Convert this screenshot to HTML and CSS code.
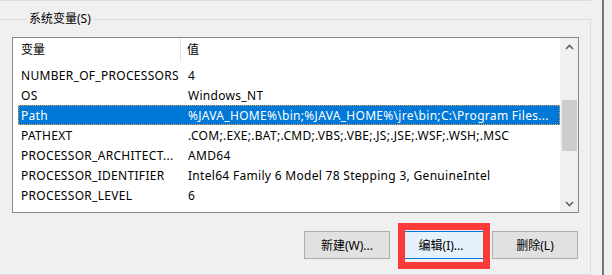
FILE: index.html
```html
<!DOCTYPE html>
<html lang="zh-CN">
<head>
  <meta charset="UTF-8" />
  <title>环境变量</title>
  <link rel="stylesheet" href="styles.css">
</head>
<body>
  <div class="window">
    <div class="prev-group"></div>

    <fieldset class="group">
      <legend>系统变量(S)</legend>

      <div class="listbox">
        <div class="list-main">
          <div class="list-header">
            <div class="col-name">变量</div>
            <div class="col-value">值</div>
          </div>
          <div class="row"><div class="col-name">NUMBER_OF_PROCESSORS</div><div class="col-value">4</div></div>
          <div class="row"><div class="col-name">OS</div><div class="col-value">Windows_NT</div></div>
          <div class="row selected"><div class="col-name">Path</div><div class="col-value">%JAVA_HOME%\bin;%JAVA_HOME%\jre\bin;C:\Program Files...</div></div>
          <div class="row"><div class="col-name">PATHEXT</div><div class="col-value">.COM;.EXE;.BAT;.CMD;.VBS;.VBE;.JS;.JSE;.WSF;.WSH;.MSC</div></div>
          <div class="row"><div class="col-name">PROCESSOR_ARCHITECT...</div><div class="col-value">AMD64</div></div>
          <div class="row"><div class="col-name">PROCESSOR_IDENTIFIER</div><div class="col-value">Intel64 Family 6 Model 78 Stepping 3, GenuineIntel</div></div>
          <div class="row"><div class="col-name">PROCESSOR_LEVEL</div><div class="col-value">6</div></div>
        </div>

        <div class="scrollbar">
          <div class="arrow">
            <svg width="9" height="6" viewBox="0 0 9 6"><polyline points="1,5 4.5,1.5 8,5" fill="none" stroke="#606060" stroke-width="1.6"/></svg>
          </div>
          <div class="track"><div class="thumb"></div></div>
          <div class="arrow">
            <svg width="9" height="6" viewBox="0 0 9 6"><polyline points="1,1 4.5,4.5 8,1" fill="none" stroke="#606060" stroke-width="1.6"/></svg>
          </div>
        </div>
      </div>

      <div class="buttons">
        <button class="btn">新建(W)...</button>
        <div class="marked">
          <button class="btn btn-focus">编辑(I)...</button>
        </div>
        <button class="btn">删除(L)</button>
      </div>
    </fieldset>
  </div>
</body>
</html>
```

FILE: styles.css
```css
body {
  margin: 0;
  background-color: #f0f0f0;
  font-family: "Noto Sans", "Noto Sans CJK SC", sans-serif;
  font-size: 12px;
  color: #000;
  overflow: hidden;
}
.window {
  width: 602px;
  height: 275px;
  border-right: 2px solid #767676;
  overflow: hidden;
}
.prev-group {
  width: 591px;
  height: 0;
  border-bottom: 1px solid #dcdcdc;
}
.group {
  margin: 10px 0 0 -10px;
  width: 601px;
  height: 264px;
  box-sizing: border-box;
  border: 1px solid #dcdcdc;
  padding: 10px 11px 0 21px;
}
.group legend {
  padding: 0 2px;
  margin-left: 15px;
  line-height: 16px;
}
.listbox {
  display: flex;
  height: 176px;
  box-sizing: border-box;
  border: 1px solid #828790;
  background-color: white;
}
.list-main {
  width: 547px;
  overflow: hidden;
  border-right: 1px solid #f0f0f0;
}
.list-header {
  display: flex;
  height: 24px;
  line-height: 24px;
  margin-bottom: 3px;
}
.list-header .col-name {
  width: 168px;
  padding-left: 8px;
  box-sizing: border-box;
  border-right: 1px solid #e5e5e5;
}
.list-header .col-value {
  padding-left: 6px;
}
.row {
  display: flex;
  height: 20px;
  line-height: 21px;
  margin-left: 5px;
  white-space: nowrap;
  letter-spacing: 0.3px;
}
.row .col-name {
  width: 164px;
  padding-left: 3px;
  box-sizing: border-box;
  overflow: hidden;
}
.row .col-value {
  padding-left: 6px;
  overflow: hidden;
}
.row.selected {
  background-color: #0078d7;
  color: white;
  outline: 1px dotted #f7a24a;
  outline-offset: -1px;
}
.scrollbar {
  width: 17px;
  display: flex;
  flex-direction: column;
  background-color: #f0f0f0;
}
.arrow {
  height: 17px;
  display: flex;
  align-items: center;
  justify-content: center;
}
.track {
  flex: 1;
  padding: 45px 1px 0 1px;
}
.thumb {
  height: 51px;
  background-color: #cdcdcd;
}
.buttons {
  display: flex;
  justify-content: flex-end;
  gap: 8px;
  margin-top: 18px;
  padding-right: 1px;
}
.btn {
  width: 86px;
  height: 28px;
  padding: 0;
  font-family: inherit;
  font-size: 12px;
  color: #000;
  background-color: #e1e1e1;
  border: 1px solid #adadad;
}
.btn-focus {
  background-color: #e5f1fb;
  border: none;
  border-top: 1px solid #0078d7;
  border-bottom: 1px solid #0078d7;
}
.marked {
  position: relative;
  display: flex;
}
.marked::after {
  content: "";
  position: absolute;
  left: 0;
  top: -8px;
  right: -6px;
  bottom: -10px;
  border: 7px solid #fb3a3a;
}
```
